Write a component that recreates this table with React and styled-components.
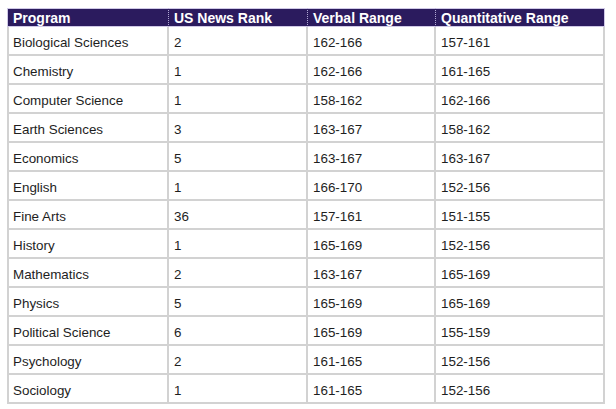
import React from "react";
import styled, { createGlobalStyle } from "styled-components";

const Global = createGlobalStyle`
  html, body { margin: 0; padding: 0; background: #ffffff; }
  body { font-family: Tahoma, "Liberation Sans", Arial, sans-serif; }
`;

const Page = styled.div`
  width: 616px;
  height: 409px;
  padding: 8px 0 0 7px;
  box-sizing: border-box;
  background: #fff;
`;

const Table = styled.div`
  display: grid;
  grid-template-columns: 162px 139px 128px 169px;
  width: 598px;
`;

const HeadCell = styled.div`
  height: 19px;
  box-sizing: border-box;
  background: #2b1b5e;
  color: #ffffff;
  font-weight: bold;
  font-size: 14px;
  line-height: 18px;
  padding-left: 5px;
  border-top: 1px solid #cfc8e6;
  border-bottom: 1px solid #cfc8e6;
  border-left: ${(p) => (p.$first ? "1px solid #cfc8e6" : "none")};
  border-right: ${(p) => (p.$last ? "1px solid #cfc8e6" : "1px dotted #b0a8d4")};
  white-space: nowrap;
`;

const Cell = styled.div`
  height: 29px;
  box-sizing: border-box;
  font-size: 13.4px;
  color: #1e1e1e;
  display: flex;
  align-items: center;
  padding-top: 3px;
  padding-left: ${(p) => (p.$first ? "4px" : "5px")};
  border-bottom: 2px solid #d2d2d2;
  border-right: 2px solid #d2d2d2;
  border-left: ${(p) => (p.$first ? "2px solid #d2d2d2" : "none")};
  white-space: nowrap;
`;

const headers = ["Program", "US News Rank", "Verbal Range", "Quantitative Range"];

const rows = [
  ["Biological Sciences", "2", "162-166", "157-161"],
  ["Chemistry", "1", "162-166", "161-165"],
  ["Computer Science", "1", "158-162", "162-166"],
  ["Earth Sciences", "3", "163-167", "158-162"],
  ["Economics", "5", "163-167", "163-167"],
  ["English", "1", "166-170", "152-156"],
  ["Fine Arts", "36", "157-161", "151-155"],
  ["History", "1", "165-169", "152-156"],
  ["Mathematics", "2", "163-167", "165-169"],
  ["Physics", "5", "165-169", "165-169"],
  ["Political Science", "6", "165-169", "155-159"],
  ["Psychology", "2", "161-165", "152-156"],
  ["Sociology", "1", "161-165", "152-156"],
];

export default function App() {
  return (
    <Page>
      <Global />
      <Table>
        {headers.map((h, i) => (
          <HeadCell key={h} $first={i === 0} $last={i === headers.length - 1}>
            {h}
          </HeadCell>
        ))}
        {rows.map((r) =>
          r.map((c, i) => (
            <Cell key={r[0] + i} $first={i === 0}>
              {c}
            </Cell>
          ))
        )}
      </Table>
    </Page>
  );
}
